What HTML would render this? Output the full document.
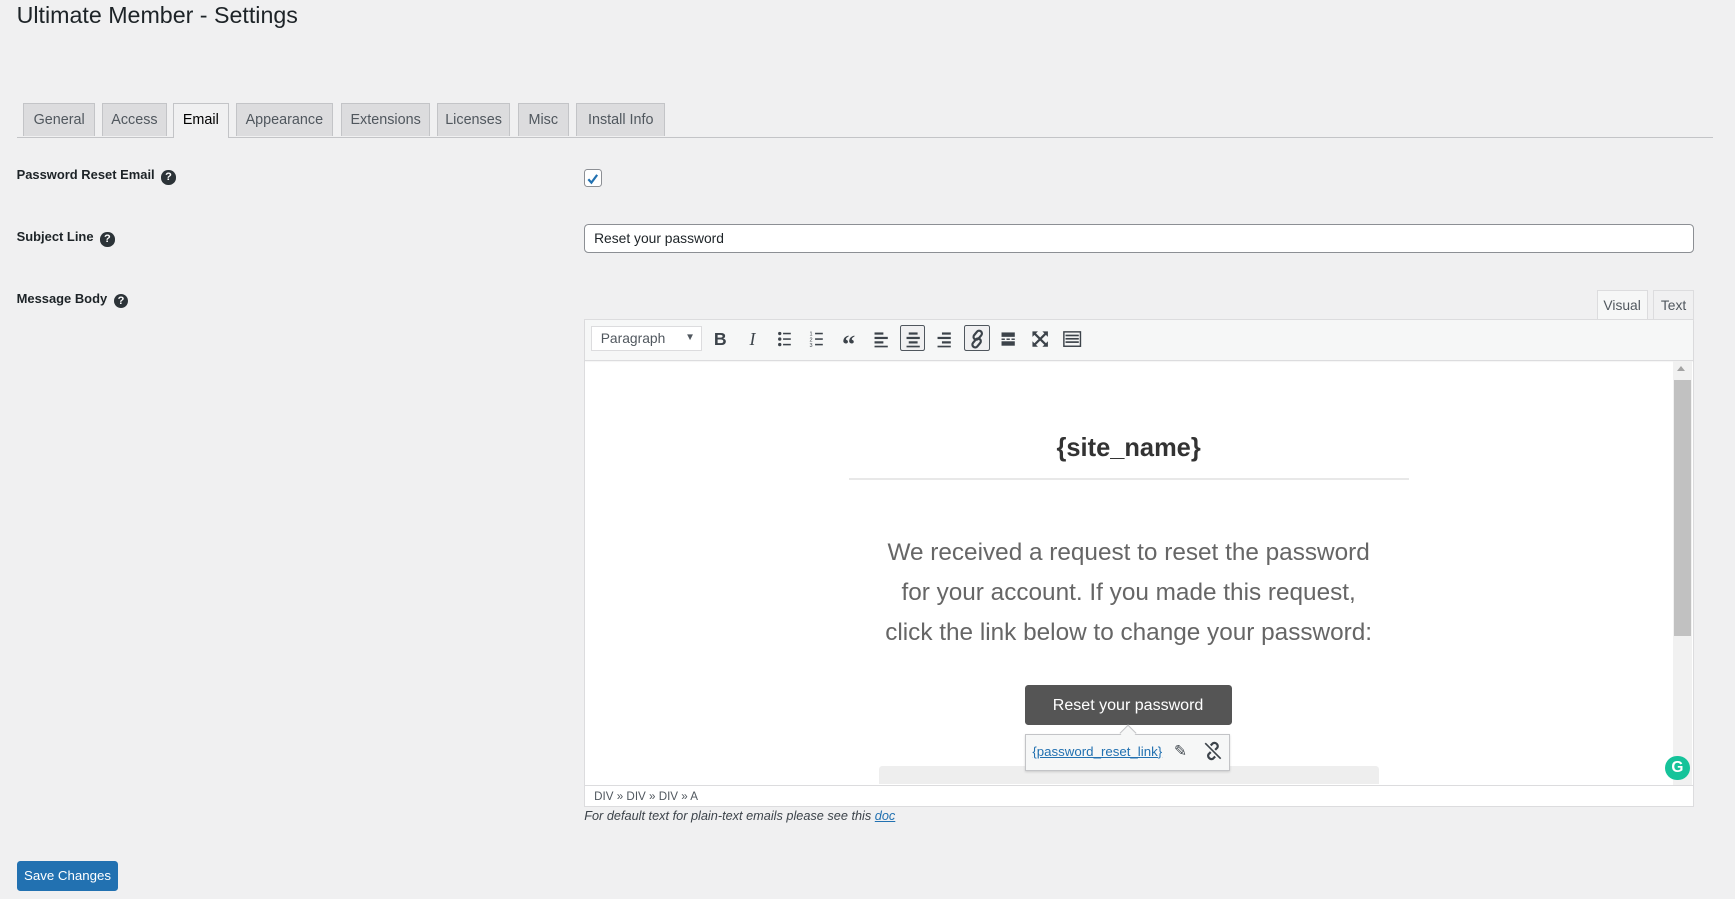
<!DOCTYPE html>
<html><head><meta charset="utf-8"><style>
html,body{margin:0;padding:0;background:#f0f0f1;}
body{width:1735px;height:899px;overflow:hidden;}
#w{zoom:1.1065;position:relative;width:1568px;height:812px;font-family:"Liberation Sans",sans-serif;color:#1d2327;}
.a{position:absolute;}
.tab{position:absolute;top:93px;height:30px;line-height:30px;background:#dcdcde;border:1px solid #c3c4c7;border-bottom:none;font-size:13px;color:#50575e;text-align:center;box-sizing:border-box;}
.lbl{position:absolute;left:15px;font-size:11.7px;font-weight:bold;color:#1d2327;}
.q{display:inline-block;width:13px;height:13px;border-radius:50%;background:#2c3338;color:#fff;font-size:10px;line-height:13px;text-align:center;margin-left:6px;vertical-align:-1px;}
.ic{position:absolute;top:296px;width:22px;height:20px;}
.ic svg{width:22px;height:20px;}
.p{position:absolute;left:529px;width:982px;text-align:center;font-size:22px;color:#666;}
</style></head><body><div id="w">
<div class="a" style="left:15px;top:2px;font-size:21px;color:#1d2327">Ultimate Member - Settings</div>
<div class="a" style="left:15px;top:124px;width:1533px;height:1px;background:#c3c4c7"></div>
<div class="tab" style="left:21px;width:65px">General</div>
<div class="tab" style="left:92px;width:59px">Access</div>
<div class="tab" style="left:156px;width:51px;background:#f0f0f1;color:#000;height:32px">Email</div>
<div class="tab" style="left:213px;width:88px">Appearance</div>
<div class="tab" style="left:308px;width:81px">Extensions</div>
<div class="tab" style="left:395px;width:66px">Licenses</div>
<div class="tab" style="left:468px;width:46px">Misc</div>
<div class="tab" style="left:521px;width:80px">Install Info</div>

<div class="lbl" style="top:151px">Password Reset Email<span class="q">?</span></div>
<div class="lbl" style="top:207px">Subject Line<span class="q">?</span></div>
<div class="lbl" style="top:263px">Message Body<span class="q">?</span></div>

<div class="a" style="left:528px;top:153px;width:14px;height:14px;border:1px solid #8c8f94;border-radius:3px;background:#fff">
<svg width="14" height="14" viewBox="0 0 14 14"><path d="M3 7.5l2.8 3L11 3.5" stroke="#2271b1" stroke-width="2" fill="none"/></svg></div>
<div class="a" style="left:528px;top:202px;border:1px solid #8c8f94;border-radius:4px;background:#fff;font-size:12.5px;line-height:25px;padding-left:8px;box-sizing:border-box;width:1003px;height:27px">Reset your password</div>

<div class="a" style="left:1443px;top:262px;width:46px;height:27px;background:#f6f7f7;border:1px solid #dcdcde;border-bottom:none;box-sizing:border-box;font-size:12.5px;line-height:26px;text-align:center;color:#50575e">Visual</div>
<div class="a" style="left:1494px;top:262px;width:37px;height:26px;background:#f0f0f1;border:1px solid #dcdcde;border-bottom:none;box-sizing:border-box;font-size:12.5px;line-height:26px;text-align:center;color:#50575e">Text</div>

<div class="a" style="left:528px;top:288px;width:1003px;height:441px;border:1px solid #dcdcde;box-sizing:border-box;background:#fff"></div>
<div class="a" style="left:529px;top:289px;width:1001px;height:36px;background:#f6f7f7;border-bottom:1px solid #dcdcde;box-shadow:0 1px 1px rgba(0,0,0,.06)"></div>
<div class="a" style="left:534px;top:295px;width:100px;height:22px;background:#fff;border:1px solid #dcdcde;box-sizing:border-box;font-size:12.5px;line-height:20px;padding-left:8px;color:#50575e">Paragraph<span style="position:absolute;right:5px;top:0;font-size:9px">▼</span></div>
<div class="ic" style="left:640px;font:bold 16px/20px 'Liberation Sans';color:#3c434a;text-align:center">B</div>
<div class="ic" style="left:669px;font:italic 16px/20px 'Liberation Serif';color:#3c434a;text-align:center">I</div>
<div class="ic" style="left:698px"><svg viewBox="0 0 22 20"><g fill="#3c434a"><circle cx="7" cy="5" r="1.5"/><circle cx="7" cy="10" r="1.5"/><circle cx="7" cy="15" r="1.5"/><rect x="10" y="4.3" width="7" height="1.4"/><rect x="10" y="9.3" width="7" height="1.4"/><rect x="10" y="14.3" width="7" height="1.4"/></g></svg></div>
<div class="ic" style="left:727px"><svg viewBox="0 0 22 20"><g fill="#3c434a"><rect x="10" y="4.3" width="7" height="1.4"/><rect x="10" y="9.3" width="7" height="1.4"/><rect x="10" y="14.3" width="7" height="1.4"/></g><text x="5" y="17" font-size="5" fill="#3c434a">3</text><text x="5" y="12" font-size="5" fill="#3c434a">2</text><text x="5" y="7" font-size="5" fill="#3c434a">1</text></svg></div>
<div class="ic" style="left:756px;font:bold 24px/30px 'Liberation Serif';color:#3c434a;text-align:center">“</div>
<div class="ic" style="left:785px"><svg viewBox="0 0 22 20"><g fill="#3c434a"><rect x="5" y="4" width="8" height="2"/><rect x="5" y="8" width="12" height="2"/><rect x="5" y="12" width="8" height="2"/><rect x="5" y="16" width="12" height="1.5"/></g></svg></div>
<div class="a" style="left:813px;top:294px;width:23px;height:23px;border:1px solid #50575e;border-radius:2px;background:#f0f0f1;box-sizing:border-box"></div>
<div class="ic" style="left:814px"><svg viewBox="0 0 22 20"><g fill="#3c434a"><rect x="7" y="4" width="8" height="2"/><rect x="5" y="8" width="12" height="2"/><rect x="7" y="12" width="8" height="2"/><rect x="5" y="16" width="12" height="1.5"/></g></svg></div>
<div class="ic" style="left:842px"><svg viewBox="0 0 22 20"><g fill="#3c434a"><rect x="9" y="4" width="8" height="2"/><rect x="5" y="8" width="12" height="2"/><rect x="9" y="12" width="8" height="2"/><rect x="5" y="16" width="12" height="1.5"/></g></svg></div>
<div class="a" style="left:871px;top:294px;width:24px;height:23px;border:1px solid #50575e;border-radius:2px;background:#f0f0f1;box-sizing:border-box"></div>
<div class="ic" style="left:872px"><svg viewBox="0 0 22 20"><g fill="none" stroke="#3c434a" stroke-width="2"><rect x="9" y="2" width="5" height="9" rx="2.5" transform="rotate(40 11.5 6.5)"/><rect x="8" y="9" width="5" height="9" rx="2.5" transform="rotate(40 10.5 13.5)"/></g></svg></div>
<div class="ic" style="left:900px"><svg viewBox="0 0 22 20"><g fill="#3c434a"><rect x="5" y="4" width="12" height="4"/><rect x="5" y="9.5" width="3" height="1.3"/><rect x="9.5" y="9.5" width="3" height="1.3"/><rect x="14" y="9.5" width="3" height="1.3"/><rect x="5" y="12" width="12" height="4"/></g></svg></div>
<div class="ic" style="left:929px"><svg viewBox="0 0 22 20"><path d="M6 5l10 10M16 5L6 15" stroke="#3c434a" stroke-width="2"/><g fill="#3c434a"><path d="M4 3h5L4 8z"/><path d="M18 3h-5l5 5z"/><path d="M4 17h5L4 12z"/><path d="M18 17h-5l5-5z"/></g></svg></div>
<div class="ic" style="left:958px"><svg viewBox="0 0 22 20"><rect x="3.5" y="3.5" width="15" height="13" fill="none" stroke="#3c434a" stroke-width="1.3"/><g fill="#3c434a"><rect x="5" y="6" width="12" height="1.5"/><rect x="5" y="9" width="12" height="1.5"/><rect x="5" y="12" width="12" height="1.5"/></g></svg></div>

<div class="a" style="left:1512px;top:326px;width:17px;height:383px;background:#f1f1f1"></div>
<div class="a" style="left:1513px;top:343px;width:15px;height:232px;background:#c1c1c1"></div>
<div class="a" style="left:1516px;top:331px;width:0;height:0;border-left:4px solid transparent;border-right:4px solid transparent;border-bottom:5px solid #a3a3a3"></div>

<div class="p" style="top:392px;font-size:23px;font-weight:bold;color:#333">{site_name}</div>
<div class="a" style="left:767px;top:432px;width:506px;height:2px;background:#e8e8e8"></div>
<div class="p" style="top:487px">We received a request to reset the password</div>
<div class="p" style="top:523px">for your account. If you made this request,</div>
<div class="p" style="top:559px">click the link below to change your password:</div>
<div class="a" style="left:794px;top:692px;width:452px;height:17px;background:#eeeeee;border-radius:3px 3px 0 0"></div>
<div class="a" style="left:926px;top:619px;width:187px;height:36px;background:#555;border-radius:3px;color:#fff;font-size:14.5px;line-height:37px;text-align:center">Reset your password</div>
<div class="a" style="left:926px;top:663px;width:186px;height:34px;background:#f6f7f7;border:1px solid #c3c4c7;box-sizing:border-box;box-shadow:0 1px 2px rgba(0,0,0,.15)"></div>
<div class="a" style="left:1014px;top:657px;width:10px;height:10px;background:#f6f7f7;border-left:1px solid #c3c4c7;border-top:1px solid #c3c4c7;transform:rotate(45deg)"></div>
<div class="a" style="left:933px;top:672px;font-size:12px;color:#2271b1;text-decoration:underline">{password_reset_link}</div>
<div class="a" style="left:1061px;top:671px;font-size:14px;color:#3c434a">✎</div>
<div class="a" style="left:1087px;top:670px"><svg width="18" height="18" viewBox="0 0 18 18"><g fill="none" stroke="#3c434a" stroke-width="2"><path d="M7 4l2-2a3 3 0 0 1 4 4l-2 2M11 14l-2 2a3 3 0 0 1-4-4l2-2"/><path d="M2 2l14 14" stroke-width="1.5"/></g></svg></div>
<div class="a" style="left:1505px;top:683px;width:22px;height:22px;border-radius:50%;background:#15c39a;color:#fff;font:bold 14px/22px 'Liberation Sans';text-align:center">G</div>

<div class="a" style="left:529px;top:709px;width:1001px;height:19px;border-top:1px solid #dcdcde;background:#fff;font-size:10.5px;line-height:19px;color:#50575e;padding-left:8px;box-sizing:border-box">DIV » DIV » DIV » A</div>
<div class="a" style="left:528px;top:730px;font-size:11.5px;font-style:italic;color:#3c434a">For default text for plain-text emails please see this <span style="color:#2271b1;text-decoration:underline">doc</span></div>
<div class="a" style="left:15px;top:778px;width:92px;height:27px;background:#2271b1;border-radius:3px;color:#fff;font-size:12px;line-height:27px;text-align:center">Save Changes</div>
</div></body></html>
